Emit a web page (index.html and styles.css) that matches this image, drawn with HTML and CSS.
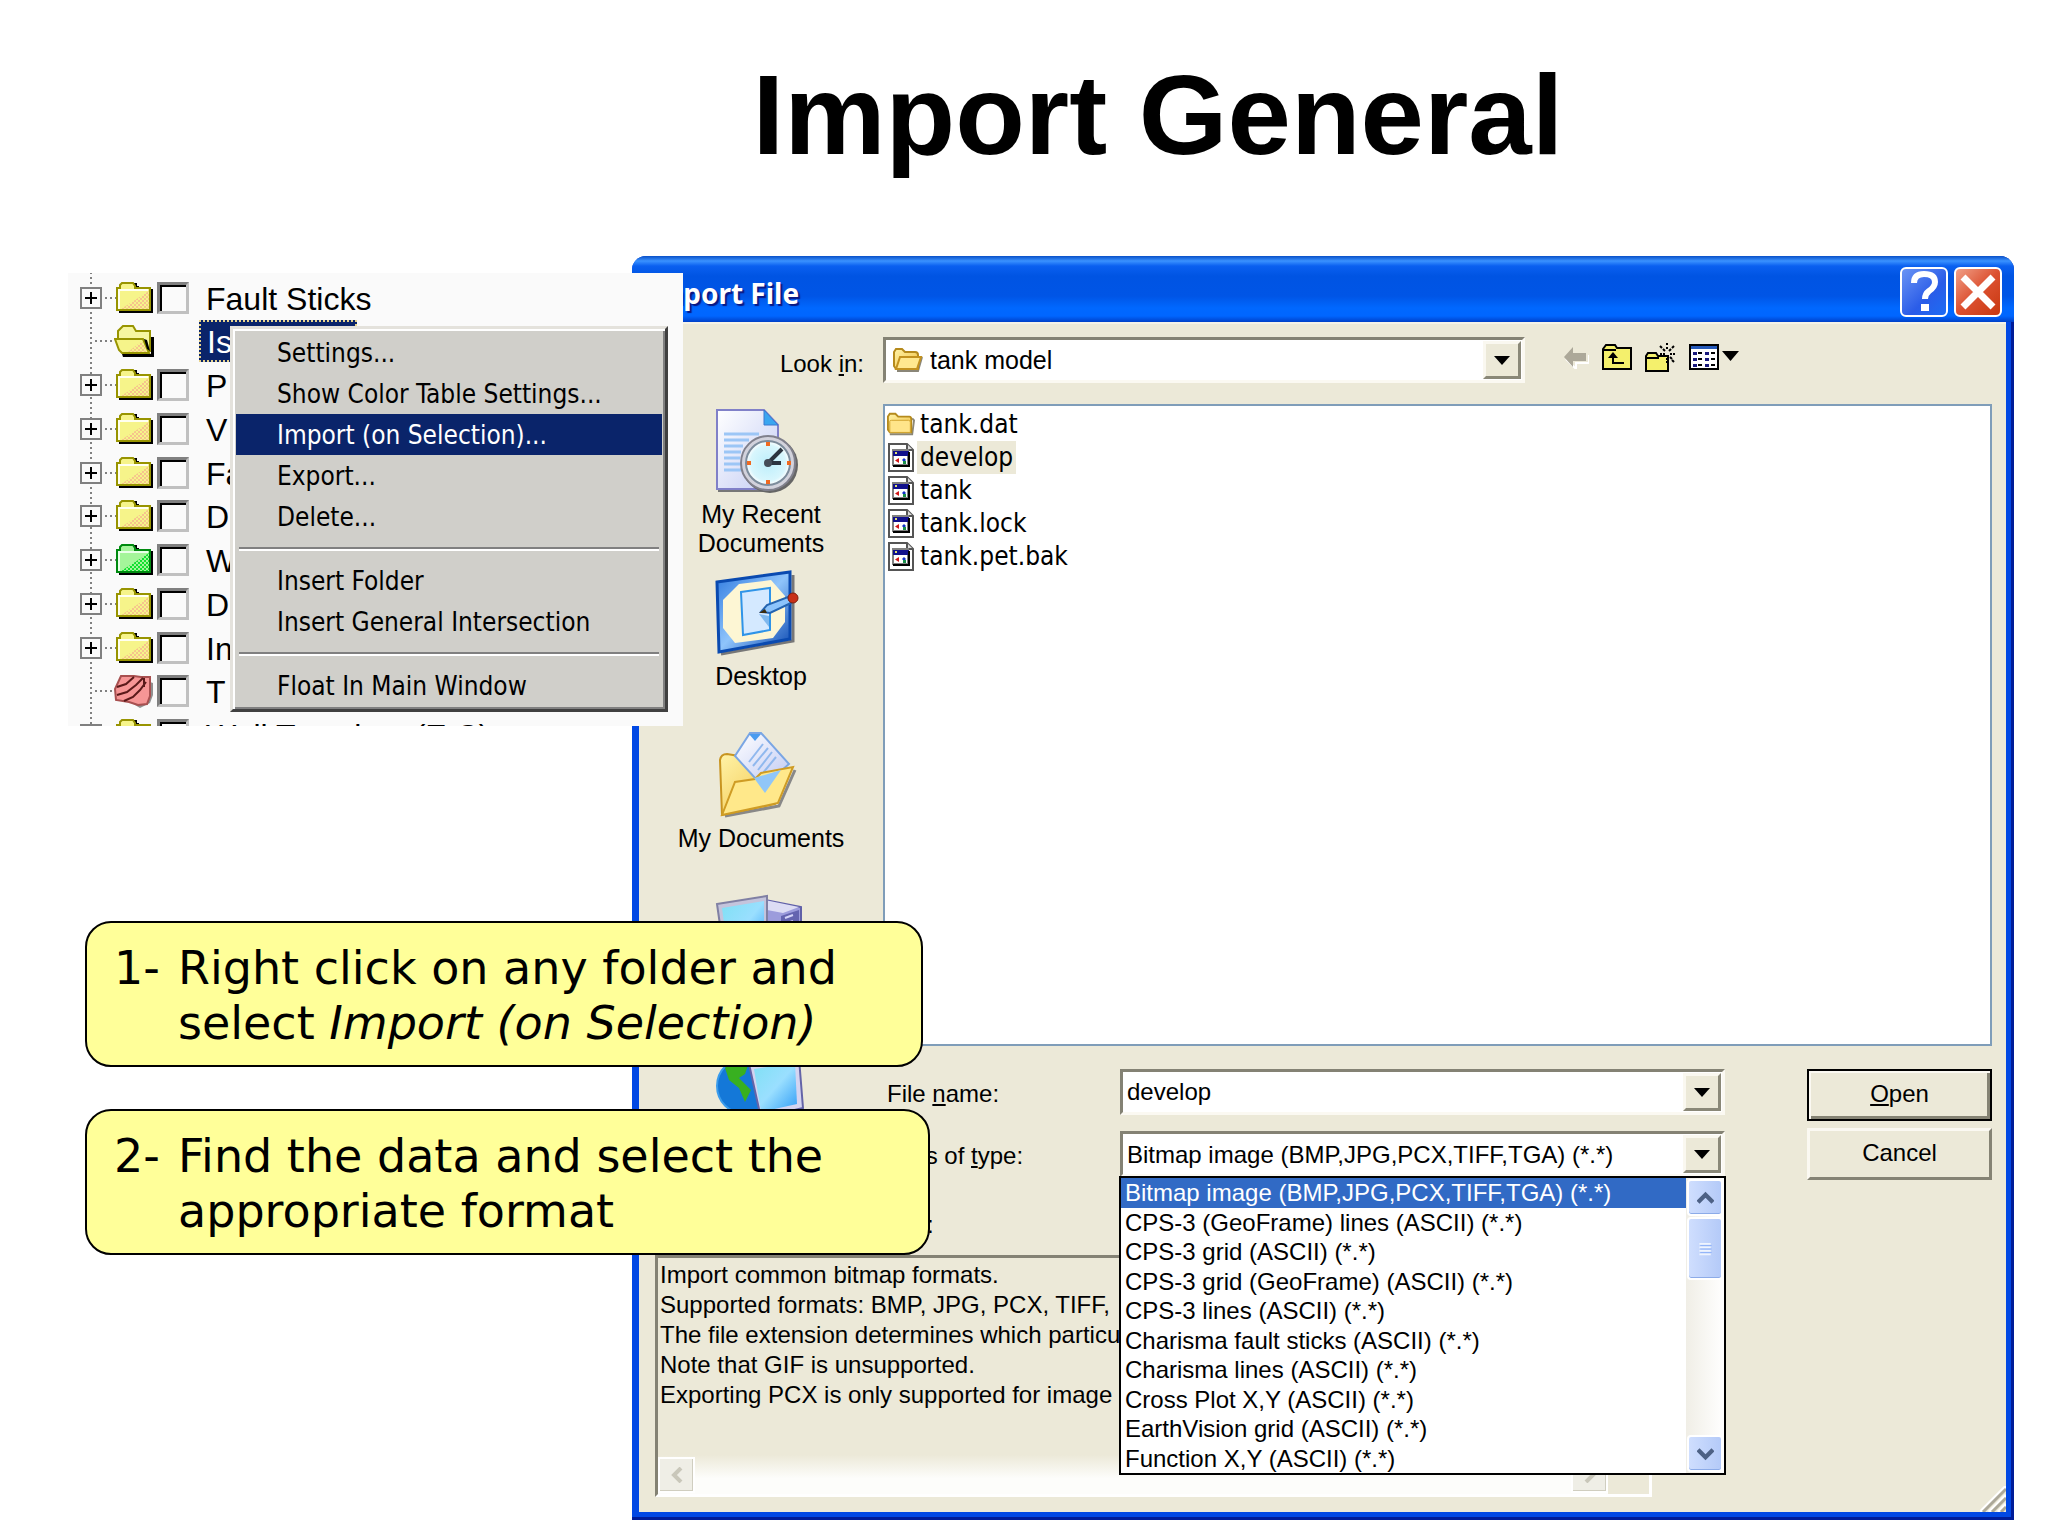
FILE: index.html
```html
<!DOCTYPE html>
<html lang="en">
<head>
<meta charset="utf-8">
<title>Import General</title>
<link rel="stylesheet" href="styles.css">
</head>
<body>
<svg class="defs" aria-hidden="true">
  <defs>
    <linearGradient id="gold" x1="0" y1="0" x2="1" y2="1"><stop offset="0" stop-color="#fff3a8"/><stop offset="1" stop-color="#f0c040"/></linearGradient>
    <linearGradient id="paper" x1="0" y1="0" x2="1" y2="1"><stop offset="0" stop-color="#ffffff"/><stop offset="1" stop-color="#c3ccf4"/></linearGradient>
    <linearGradient id="screen" x1="0" y1="0" x2="1" y2="1"><stop offset="0" stop-color="#7fe0f4"/><stop offset="0.5" stop-color="#9adfff"/><stop offset="1" stop-color="#2f9cf6"/></linearGradient>
    <linearGradient id="blue" x1="0" y1="0" x2="1" y2="1"><stop offset="0" stop-color="#2f7ae0"/><stop offset="0.5" stop-color="#8fc4fb"/><stop offset="1" stop-color="#0a47b0"/></linearGradient>
    <radialGradient id="dial"><stop offset="0" stop-color="#bdeefb"/><stop offset="0.8" stop-color="#d8f6fd"/><stop offset="1" stop-color="#ffffff"/></radialGradient>
    <pattern id="peach" width="4" height="4" patternUnits="userSpaceOnUse"><path d="M0 0h2v2H0zM2 2h2v2H2z" fill="#f6c48c"/></pattern>
    <pattern id="leaf" width="4" height="4" patternUnits="userSpaceOnUse"><path d="M0 0h2v2H0zM2 2h2v2H2z" fill="#10e030"/></pattern>
    <symbol id="folder" viewBox="0 0 37 32">
      <path d="M3 29V31H37V7H34V29z" fill="#000"/><path d="M18 1h3v3h2v2h-5z" fill="#000"/>
      <path d="M1 6H4V3L6 1H17L19 4V6H34V28H1z" fill="#f6f48a" stroke="#989400" stroke-width="2"/>
      <path d="M5 27L33 9V27z" fill="url(#peach)"/>
      <path d="M3 27V8H32" fill="none" stroke="#fffff0" stroke-width="2"/>
    </symbol>
    <symbol id="folder-green" viewBox="0 0 37 32">
      <path d="M3 29V31H37V7H34V29z" fill="#000"/><path d="M18 1h3v3h2v2h-5z" fill="#000"/>
      <path d="M1 6H4V3L6 1H17L19 4V6H34V28H1z" fill="#a4f59a" stroke="#008a10" stroke-width="2"/>
      <path d="M5 27L33 9V27z" fill="url(#leaf)"/>
      <path d="M3 27V8H32" fill="none" stroke="#eaffea" stroke-width="2"/>
    </symbol>
    <symbol id="folder-open" viewBox="0 0 40 32">
      <path d="M8 29h29V12h3v20H9z" fill="#000"/>
      <path d="M4 13V6L7 3 9 1H19L22 6H36V27" fill="#f6f6a0" stroke="#989400" stroke-width="2"/>
      <path d="M1 14H29L35 28H8L5 25z" fill="#f6f48a" stroke="#989400" stroke-width="2"/>
      <path d="M14 27L28 16 33 27z" fill="url(#peach)"/>
      <path d="M30 14l3 1 3 11-3-2z" fill="#000"/>
    </symbol>
    <symbol id="surface" viewBox="0 0 40 34">
      <path d="M36 8l3 1v12l-3 8-6 3-4 2-10-6z" fill="#909090"/>
      <path d="M7 2H20L27 3H36V22L33 30 24 31 15 28 2 26 1 15z" fill="#f69696" stroke="#a85050" stroke-width="2"/>
      <path d="M3 13L12 10 20 3M3 21L13 18 22 11 29 4M10 27L19 23 26 16 32 8M30 4v9" fill="none" stroke="#5a1a1a" stroke-width="2"/>
    </symbol>
    <symbol id="xp-folder" viewBox="0 0 30 25">
      <path d="M3 23H27L29 8 27 6" fill="none" stroke="#8a8678" stroke-width="2"/>
      <path d="M1 4L3 1H9L12 4H24Q26 4 26 7V21H3L1 18z" fill="url(#gold)" stroke="#b58a1c" stroke-width="2"/>
      <path d="M3 21V9Q3 8 5 8H23Q25 8 25 10V21z" fill="#ffe58a" stroke="#d0a22c" stroke-width="1"/>
    </symbol>
    <symbol id="xp-folder-open" viewBox="0 0 30 25">
      <path d="M4 23H25L29 9" fill="none" stroke="#8a8678" stroke-width="2"/>
      <path d="M1 4L3 1H9L12 4H22Q25 4 25 7V21H3L1 18z" fill="url(#gold)" stroke="#b58a1c" stroke-width="2"/>
      <path d="M3 21L7 9H28L24 21z" fill="#ffe88f" stroke="#c3921f" stroke-width="2"/>
    </symbol>
    <symbol id="doc" viewBox="0 0 26 29">
      <path d="M1 1H19L25 7V28H1z" fill="#fff" stroke="#555" stroke-width="2"/>
      <path d="M19 1V7H25" fill="#ddd" stroke="#555" stroke-width="2"/>
      <path d="M5 7H20V22H5z" fill="#fff" stroke="#808080" stroke-width="2"/>
      <path d="M5 8H21V13H5z" fill="#10108c"/><path d="M7 9h2v2H7z" fill="#e0e070"/>
      <path d="M21 9V23H5" fill="none" stroke="#000" stroke-width="2"/>
      <path d="M11 15v5l-4-2.500z" fill="#d01818"/><path d="M14 17l2-2 2 2-2 2z" fill="#1030c8"/><path d="M15 18h3v3h-3z" fill="#18904c"/>
    </symbol>
    <symbol id="arrow-down" viewBox="0 0 16 9"><path d="M0 0H16L8 9z" fill="#000"/></symbol>
  </defs>
</svg>

<main class="slide">
  <h1 class="slide-title">Import General</h1>

  <section class="dialog" aria-label="Import File">
    <header class="titlebar">
      <h2 class="titlebar-text">Import File</h2>
      <button class="caption-btn help" aria-label="Help"><svg viewBox="0 0 44 46"><path d="M12 14Q12 5 22 5Q33 5 33 13Q33 18 27 22Q23 25 23 30" fill="none" stroke="#fff" stroke-width="6"/><path d="M19 35h8v7h-8z" fill="#fff"/></svg></button>
      <button class="caption-btn close" aria-label="Close"><svg viewBox="0 0 44 46"><path d="M7 8L37 38M37 8L7 38" stroke="#fff" stroke-width="7"/></svg></button>
    </header>

    <div class="dialog-body">
      <label class="look-label" for="look-in">Look <u>i</u>n:</label>
      <div class="look-bar">
        <div class="combo look-combo">
          <svg class="combo-icon"><use href="#xp-folder-open"/></svg>
          <select id="look-in" class="combo-field"><option>tank model</option></select>
          <span class="combo-arrow"><svg><use href="#arrow-down"/></svg></span>
        </div>
        <div class="toolbar">
          <button class="tool back" aria-label="Back"><svg viewBox="0 0 26 24"><path d="M3 14L13 24V18H26V10" fill="none" stroke="#fff" stroke-width="2"/><path d="M1 12L10 2V8H23V16H10V22z" fill="#aca899"/></svg></button>
          <button class="tool up" aria-label="Up one level"><svg viewBox="0 0 30 26"><path d="M1 25V5L4 1H13L15 4H29V25z" fill="#f4f06c" stroke="#000" stroke-width="2"/><path d="M2 6H14" stroke="#000" stroke-width="2"/><path d="M6 14L11 8 16 14z"/><path d="M11 12V19H22" fill="none" stroke="#000" stroke-width="2"/></svg></button>
          <button class="tool new" aria-label="New folder"><svg viewBox="0 0 31 29"><path d="M1 28V13L3 10H11L13 13H23V28z" fill="#f4f06c" stroke="#000" stroke-width="2"/><path d="M2 15H14" stroke="#000" stroke-width="2"/><path d="M22 0v2M22 4v2M22 15v2M22 18v2M15 3l2 2M18 6l2 2M29 3l-2 2M26 6l-2 2M15 11h2M18 11h2M25 11h2M28 11h2M25 14l2 2M27 17l2 2" stroke="#000" stroke-width="2"/></svg></button>
          <button class="tool view" aria-label="View menu"><svg viewBox="0 0 50 26"><path d="M1 1H29V25H1z" fill="#fff" stroke="#000" stroke-width="2"/><path d="M2 2h26v3H2z" fill="#2458b8"/><path d="M4 8h4v3H4zM4 14h4v3H4zM4 20h4v3H4zM16 8h4v3h-4zM16 14h4v3h-4zM16 20h4v3h-4z" fill="#18187c"/><path d="M9 8h4v2H9zM9 14h4v2H9zM9 20h4v2H9zM22 8h4v2h-4zM22 14h4v2h-4zM22 20h4v2h-4z"/><path d="M33 7H50L41.500 17z"/></svg></button>
        </div>
      </div>

      <nav class="places">
        <a class="place" href="#recent">
          <svg class="place-icon" viewBox="0 0 84 86"><path d="M2 2H49L63 17V81H2z" fill="url(#paper)" stroke="#8080c8" stroke-width="2"/><path d="M3 83H60" stroke="#777" stroke-width="2"/><path d="M49 2L63 17H49z" fill="#3aa6f0" stroke="#3a78d0" stroke-width="1"/><path d="M9 26H44M9 32H34M9 38H28M9 44H26M9 50H25M9 56H26M9 62H28" stroke="#9cc6f6" stroke-width="3"/><circle cx="55" cy="57" r="28" fill="#666"/><circle cx="53" cy="55" r="27" fill="#d2d2dc" stroke="#80808c" stroke-width="2"/><circle cx="53" cy="55" r="22" fill="url(#dial)" stroke="#7c8c9c" stroke-width="2"/><path d="M53 55L67 41M53 55H66" stroke="#2c3440" stroke-width="4"/><circle cx="53" cy="55" r="4" fill="#444c58"/><path d="M51 34h4v4h-4zM51 72h4v4h-4zM32 53h4v4h-4zM72 53h4v4h-4z" fill="#f06a20"/></svg>
          <span>My Recent<br>Documents</span>
        </a>
        <a class="place" href="#desktop">
          <svg class="place-icon" viewBox="0 0 84 86"><path d="M6 84L78 71V5" fill="none" stroke="#777" stroke-width="3"/><path d="M2 12L75 2V69L4 82z" fill="url(#blue)" stroke="#0a4ab0" stroke-width="3"/><path d="M24 14L56 10 70 26V52L58 68 20 73 8 58V30z" fill="#fdf6d4"/><path d="M26 22L55 18V60L28 65z" fill="#d4e9ff" stroke="#2f94e8" stroke-width="2"/><path d="M44 44L54 57 54 46z" fill="#7fb8ee"/><path d="M46 42L52 35 73 27 76 33 55 43z" fill="#8cc4fc" stroke="#2464b0" stroke-width="2"/><path d="M44 43l6-4 2 4z" fill="#3a2c10"/><circle cx="78" cy="28" r="5" fill="#c83018" stroke="#802010"/></svg>
          <span>Desktop</span>
        </a>
        <a class="place" href="#documents">
          <svg class="place-icon" viewBox="0 0 84 86"><path d="M10 84L64 74 80 38" fill="none" stroke="#888" stroke-width="3"/><path d="M5 28Q6 22 12 22L24 24 70 36 60 72 7 83z" fill="url(#gold)" stroke="#c89420" stroke-width="2"/><path d="M35 1H46L74 32 58 46H40L20 24z" fill="url(#paper)" stroke="#7aa6e4" stroke-width="2"/><path d="M34 2H46L40 9z" fill="#4a9cf0"/><path d="M48 12L34 30M53 16L38 34M57 20L43 38M61 25L48 41" stroke="#90b8ee" stroke-width="2"/><path d="M7 83L20 50 40 47 46 41 78 35 63 71z" fill="#ffe88a" stroke="#cf9c24" stroke-width="2"/><path d="M39 46L66 38 50 61z" fill="#90c6f8"/></svg>
          <span>My Documents</span>
        </a>
        <a class="place" href="#computer" aria-label="My Computer">
          <svg class="place-icon" viewBox="0 0 84 86"><path d="M50 6L86 13V52L52 62z" fill="#9c9cdc" stroke="#6060a8" stroke-width="2"/><path d="M50 6L84 13 68 19 52 16z" fill="#dcdcf4"/><path d="M66 22L84 16V50L66 56z" fill="#6464b0"/><path d="M70 24l8-3M70 30l8-3" stroke="#d4d4f8" stroke-width="2"/><path d="M2 10L52 2V58L10 66z" fill="#c4c4dc" stroke="#8080a4" stroke-width="2"/><path d="M7 14L49 7V53L13 59z" fill="url(#screen)"/></svg>
        </a>
        <a class="place network" href="#network" aria-label="My Network Places">
          <svg class="place-icon" viewBox="0 0 84 86"><circle cx="30" cy="52" r="28" fill="#1478d8" stroke="#3a9cec" stroke-width="2"/><path d="M10 34Q20 24 34 28L30 40 24 44 36 56 30 68 24 54 14 46z" fill="#38b020"/><path d="M58 76L80 72 76 84 60 86z" fill="#5050b8"/><path d="M34 30L84 24 88 74 46 84z" fill="#d4d4f0" stroke="#6464a8" stroke-width="2"/><path d="M39 35L80 29 82 70 46 78z" fill="url(#screen)"/></svg>
        </a>
      </nav>

      <div class="files">
        <ul class="file-list">
          <li class="file"><svg class="file-icon"><use href="#xp-folder"/></svg><span class="file-name">tank.dat</span></li>
          <li class="file"><svg class="file-icon"><use href="#doc"/></svg><span class="file-name selected">develop</span></li>
          <li class="file"><svg class="file-icon"><use href="#doc"/></svg><span class="file-name">tank</span></li>
          <li class="file"><svg class="file-icon"><use href="#doc"/></svg><span class="file-name">tank.lock</span></li>
          <li class="file"><svg class="file-icon"><use href="#doc"/></svg><span class="file-name">tank.pet.bak</span></li>
        </ul>

        <form class="form">
          <div class="fields">
            <label class="field-label" for="file-name">File <u>n</u>ame:</label>
            <div class="combo">
              <input id="file-name" class="combo-field" type="text" value="develop">
              <span class="combo-arrow"><svg><use href="#arrow-down"/></svg></span>
            </div>
            <label class="field-label" for="file-type">Files of <u>t</u>ype:</label>
            <div class="type-field">
              <div class="combo">
                <select id="file-type" class="combo-field"><option>Bitmap image (BMP,JPG,PCX,TIFF,TGA) (*.*)</option></select>
                <span class="combo-arrow"><svg><use href="#arrow-down"/></svg></span>
              </div>
              <div class="dropdown">
                <ul class="options" role="listbox" aria-label="Files of type">
                  <li class="option active" role="option" aria-selected="true">Bitmap image (BMP,JPG,PCX,TIFF,TGA) (*.*)</li>
                  <li class="option" role="option">CPS-3 (GeoFrame) lines (ASCII) (*.*)</li>
                  <li class="option" role="option">CPS-3 grid (ASCII) (*.*)</li>
                  <li class="option" role="option">CPS-3 grid (GeoFrame) (ASCII) (*.*)</li>
                  <li class="option" role="option">CPS-3 lines (ASCII) (*.*)</li>
                  <li class="option" role="option">Charisma fault sticks (ASCII) (*.*)</li>
                  <li class="option" role="option">Charisma lines (ASCII) (*.*)</li>
                  <li class="option" role="option">Cross Plot X,Y (ASCII) (*.*)</li>
                  <li class="option" role="option">EarthVision grid (ASCII) (*.*)</li>
                  <li class="option" role="option">Function X,Y (ASCII) (*.*)</li>
                </ul>
                <div class="vscroll">
                  <span class="vscroll-part"><svg viewBox="0 0 16 12"><path d="M1 10L8 3 15 10" fill="none" stroke="#4d6185" stroke-width="4"/></svg></span>
                  <span class="vscroll-part thumb"><svg viewBox="0 0 16 16"><path d="M1 2H14M1 6H14M1 10H14M1 14H14" stroke="#eef4fe" stroke-width="2"/><path d="M2 4H15M2 8H15M2 12H15" stroke="#8cb0f8" stroke-width="1"/></svg></span>
                  <span class="vscroll-part bottom"><svg viewBox="0 0 16 12"><path d="M1 2L8 9 15 2" fill="none" stroke="#4d6185" stroke-width="4"/></svg></span>
                </div>
              </div>
            </div>
            <span class="field-label info-label">Info:</span>
          </div>
          <div class="actions">
            <button class="btn default" type="button"><span><u>O</u>pen</span></button>
            <button class="btn" type="button">Cancel</button>
          </div>
        </form>
      </div>

      <div class="description">
        <div class="description-text">
          <p>Import common bitmap formats.</p>
          <p>Supported formats: BMP, JPG, PCX, TIFF,</p>
          <p>The file extension determines which particular</p>
          <p>Note that GIF is unsupported.</p>
          <p>Exporting PCX is only supported for image</p>
        </div>
        <div class="hscroll">
          <span class="hscroll-btn"><svg viewBox="0 0 12 16"><path d="M10 1L3 8 10 15" fill="none" stroke="#c9c7ba" stroke-width="4"/></svg></span>
          <span class="hscroll-btn"><svg viewBox="0 0 12 16"><path d="M2 1L9 8 2 15" fill="none" stroke="#c9c7ba" stroke-width="4"/></svg></span>
        </div>
      </div>
      <svg class="grip" viewBox="0 0 26 26"><path d="M0 26L26 0M9 26L26 9M18 26L26 18" stroke="#fff" stroke-width="3"/><path d="M3 26L26 3M12 26L26 12M21 26L26 21" stroke="#aca899" stroke-width="3"/></svg>
    </div>
  </section>

  <section class="tree-panel" aria-label="Project tree">
    <ul class="tree">
      <li class="node"><span class="expander"></span><span class="link"></span><svg class="node-icon"><use href="#folder"/></svg><input class="node-check" type="checkbox" id="n0"><label class="node-label" for="n0">Survey polygons</label></li>
      <li class="node"><span class="expander"></span><span class="link"></span><svg class="node-icon"><use href="#folder"/></svg><input class="node-check" type="checkbox" id="n1"><label class="node-label" for="n1">Fault Sticks</label></li>
      <li class="node leaf"><span class="link"></span><svg class="node-icon wide"><use href="#folder-open"/></svg><span class="node-label selected">Is</span></li>
      <li class="node"><span class="expander"></span><span class="link"></span><svg class="node-icon"><use href="#folder"/></svg><input class="node-check" type="checkbox" id="n2"><label class="node-label" for="n2">P</label></li>
      <li class="node"><span class="expander"></span><span class="link"></span><svg class="node-icon"><use href="#folder"/></svg><input class="node-check" type="checkbox" id="n3"><label class="node-label" for="n3">V</label></li>
      <li class="node"><span class="expander"></span><span class="link"></span><svg class="node-icon"><use href="#folder"/></svg><input class="node-check" type="checkbox" id="n4"><label class="node-label" for="n4">Fa</label></li>
      <li class="node"><span class="expander"></span><span class="link"></span><svg class="node-icon"><use href="#folder"/></svg><input class="node-check" type="checkbox" id="n5"><label class="node-label" for="n5">D</label></li>
      <li class="node"><span class="expander"></span><span class="link"></span><svg class="node-icon"><use href="#folder-green"/></svg><input class="node-check" type="checkbox" id="n6"><label class="node-label" for="n6">W</label></li>
      <li class="node"><span class="expander"></span><span class="link"></span><svg class="node-icon"><use href="#folder"/></svg><input class="node-check" type="checkbox" id="n7"><label class="node-label" for="n7">D</label></li>
      <li class="node"><span class="expander"></span><span class="link"></span><svg class="node-icon"><use href="#folder"/></svg><input class="node-check" type="checkbox" id="n8"><label class="node-label" for="n8">In</label></li>
      <li class="node leaf"><span class="link"></span><svg class="node-icon wide"><use href="#surface"/></svg><input class="node-check" type="checkbox" id="n9"><label class="node-label" for="n9">T</label></li>
      <li class="node"><span class="expander"></span><span class="link"></span><svg class="node-icon"><use href="#folder"/></svg><input class="node-check" type="checkbox" id="n10"><label class="node-label" for="n10">Well Template (E C)</label></li>
    </ul>
    <div class="menu" role="menu">
      <button class="menu-item" role="menuitem">Settings...</button>
      <button class="menu-item" role="menuitem">Show Color Table Settings...</button>
      <button class="menu-item active" role="menuitem">Import (on Selection)...</button>
      <button class="menu-item" role="menuitem">Export...</button>
      <button class="menu-item" role="menuitem">Delete...</button>
      <hr class="menu-sep">
      <button class="menu-item" role="menuitem">Insert Folder</button>
      <button class="menu-item" role="menuitem">Insert General Intersection</button>
      <hr class="menu-sep">
      <button class="menu-item" role="menuitem">Float In Main Window</button>
    </div>
  </section>

  <div class="callout first"><span class="callout-num">1-</span><p>Right click on any folder and<br>select <em>Import (on Selection)</em></p></div>
  <div class="callout second"><span class="callout-num">2-</span><p>Find the data and select the<br>appropriate format</p></div>
</main>
</body>
</html>
```
FILE: styles.css
```css
* { box-sizing: border-box; }
body { margin: 0; background: #fff; color: #000; font-family: "Liberation Sans", Arial, sans-serif; font-size: 24px; }
h1, h2, p, ul { margin: 0; padding: 0; }
ul { list-style: none; }
button, input, select { font: inherit; color: inherit; margin: 0; border-radius: 0; }
svg { display: block; }
.defs { position: absolute; width: 0; height: 0; }

.slide { position: relative; padding: 0 34px 16px 632px; }
.slide-title { height: 256px; margin-left: -330px; padding-top: 49px; font-size: 114px; line-height: 132px; text-align: center; white-space: nowrap; }

/* Dialog window */
.dialog { padding: 0 5px 5px 7px; border: solid #001c98; border-width: 0 3px 3px 0; border-radius: 14px 14px 0 0; background: #0148e4; }
.titlebar { display: flex; align-items: center; gap: 6px; height: 66px; margin: 0 -8px 0 -7px; padding: 6px 12px 0 13px; border-radius: 14px 14px 0 0; background: linear-gradient(#0a50c8 0, #3a92ff 5px, #0a60f0 10px, #0054e3 20px, #0055e6 40px, #0068ff 52px, #0066ff 60px, #0040c8 66px); }
.titlebar-text { flex: 1; padding-top: 2px; font: bold 28px/40px "Noto Sans", "Open Sans", sans-serif; color: #fff; text-shadow: 2px 2px 1px #0a1883; }
.caption-btn { width: 48px; height: 50px; padding: 0; border: 2px solid #fff; border-radius: 6px; }
.caption-btn.help { background: linear-gradient(135deg, #6a94f4, #2a5ce8 60%, #1c6cf4); }
.caption-btn.close { background: linear-gradient(135deg, #f0a088, #dc5030 50%, #c83810); }

.dialog-body { position: relative; display: grid; grid-template-columns: 244px minmax(0, 1fr); padding-right: 14px; padding-bottom: 15px; background: #ece9d8; border-top: 2px solid #f4f2e8; }
.look-label { justify-self: end; padding: 24px 19px 0 0; line-height: 32px; }
.look-bar { display: flex; height: 80px; padding-top: 13px; }
.combo { display: flex; align-items: center; height: 46px; background: #fff; border: 3px solid; border-color: #848274 #fbf9f2 #fbf9f2 #848274; padding: 1px; }
.combo-field { flex: 1; min-width: 0; height: 38px; padding: 0 0 0 3px; border: 0; outline: 0; background: transparent; appearance: none; }
.combo-icon { width: 30px; height: 25px; margin-left: 6px; }
.combo-icon + .combo-field { padding-left: 7px; font-size: 25px; }
.combo-arrow { display: flex; align-items: center; justify-content: center; width: 38px; height: 38px; background: #ece9d8; border: 3px solid; border-color: #faf8f0 #8a8878 #8a8878 #faf8f0; }
.combo-arrow svg { width: 16px; height: 9px; }
.look-combo { flex: 1; }
.toolbar { display: flex; align-items: center; gap: 13px; width: 467px; height: 46px; padding: 0 0 6px 38px; }
.tool { padding: 0; border: 0; background: none; }
.back svg { width: 26px; height: 24px; }
.up svg { width: 30px; height: 26px; }
.new svg { width: 31px; height: 29px; }
.view svg { width: 50px; height: 26px; }

.places { display: flex; flex-direction: column; align-items: center; gap: 12px; padding-top: 4px; font-size: 25px; line-height: 29px; text-align: center; }
.place { display: flex; flex-direction: column; align-items: center; gap: 6px; height: 150px; color: #000; text-decoration: none; }
.place-icon { width: 84px; height: 86px; margin-right: 8px; overflow: visible; }
.network { height: 100px; margin-top: -22px; }

.file-list { height: 642px; padding: 2px 0 0 2px; background: #fff; border: 2px solid #7f9db9; font-family: "DejaVu Sans Condensed", "Noto Sans", sans-serif; font-size: 26px; line-height: 33px; }
.file { display: flex; align-items: center; gap: 2px; }
.file-icon { width: 28px; height: 29px; }
.file-name { padding: 0 3px; }
.file-name.selected { background: #ece9d8; }

.form { display: flex; gap: 82px; padding-top: 23px; }
.fields { flex: 1; display: grid; grid-template-columns: 237px minmax(0, 1fr); align-content: start; row-gap: 16px; }
.field-label { padding: 5px 0 0 4px; line-height: 40px; }
.info-label { line-height: 32px; padding: 16px 0 14px 4px; }
.actions { display: flex; flex-direction: column; gap: 7px; width: 185px; }
.btn { height: 52px; padding: 0 0 3px; background: #ece9d8; border: 3px solid; border-color: #fbf9f2 #858374 #858374 #fbf9f2; }
.btn.default { border: 2px solid #000; box-shadow: inset 2px 2px #fbf9f2, inset -3px -3px #858374; }

.type-field { position: relative; }
.dropdown { position: absolute; z-index: 2; top: 45px; left: -1px; right: -1px; height: 299px; display: flex; background: #fff; border: 2px solid #000; }
.options { flex: 1; display: grid; grid-template-rows: repeat(10, 1fr); }
.option { padding-left: 4px; line-height: 29px; white-space: nowrap; }
.option.active { background: #316ac5; color: #fff; }
.vscroll { display: flex; flex-direction: column; width: 38px; padding: 1px; gap: 1px; background: linear-gradient(90deg, #f0eee6, #fff); }
.vscroll-part { display: flex; align-items: center; justify-content: center; height: 37px; border: 2px solid #fff; border-radius: 4px; background: linear-gradient(90deg, #cfdefe, #b4caf8); box-shadow: inset 0 -1px #8cabe8; }
.vscroll-part svg { width: 17px; height: 14px; }
.vscroll-part.thumb { height: 63px; }
.vscroll-part.bottom { margin-top: auto; }

.description { grid-column: 1 / 3; height: 242px; margin: 0 340px 0 16px; display: flex; flex-direction: column; justify-content: space-between; border: 3px solid; border-color: #848274 #fff #fff #848274; overflow: hidden; }
.description-text { padding: 2px 0 0 2px; line-height: 30px; white-space: nowrap; }
.hscroll { display: flex; justify-content: space-between; height: 39px; margin-right: 41px; padding: 2px 0 1px; background: linear-gradient(#ece9d8, #fdfdfb 60%); }
.hscroll-btn { display: flex; align-items: center; justify-content: center; width: 37px; height: 36px; background: #efeee6; border: 2px solid #fff; box-shadow: inset -1px -1px #d0cec0; }
.hscroll-btn svg { width: 12px; height: 16px; }
.grip { position: absolute; right: 0; bottom: 0; width: 26px; height: 26px; }

/* Project tree with its context menu */
.tree-panel { position: absolute; left: 68px; top: 273px; width: 615px; height: 453px; overflow: hidden; background: #fafafa; }
.tree { display: grid; grid-template-rows: repeat(12, 1fr); height: 525px; margin-top: -41px; font-size: 32px; background: repeating-linear-gradient(#808080 0 2px, transparent 2px 5px) 22px 0 / 2px 100% no-repeat; }
.node { display: flex; align-items: center; padding-left: 12px; white-space: nowrap; }
.expander { width: 22px; height: 22px; border: 2px solid #808080; background: linear-gradient(#000, #000) center / 12px 2px no-repeat, linear-gradient(#000, #000) center / 2px 12px no-repeat, #fafafa; }
.link { width: 14px; height: 2px; background: repeating-linear-gradient(90deg, transparent 0 3px, #808080 3px 5px); }
.leaf .link { width: 22px; margin-left: 12px; }
.node-icon { width: 37px; height: 32px; }
.node-icon.wide { width: 40px; height: 34px; margin-right: -1px; }
.node-check { appearance: none; width: 32px; height: 32px; margin-left: 4px; background: #fafafa; border: 3px solid; border-color: #808080 #c0c0c0 #c0c0c0 #808080; box-shadow: inset 2px 2px #000; }
.node-label { margin-left: 9px; padding: 3px 8px 0; line-height: 39px; }
.node-label.selected { margin-left: 46px; width: 158px; background: #0a246a; color: #fff; outline: 2px dotted #e8d48c; outline-offset: -2px; }

.menu { position: absolute; left: 162px; top: 53px; width: 438px; padding: 3px; background: #d0cfca; border: 3px solid; border-color: #e4e2dc #404040 #404040 #e4e2dc; box-shadow: inset 2px 2px #fff, inset -2px -2px #808080; font-family: "DejaVu Sans Condensed", "Noto Sans", sans-serif; }
.menu-item { display: block; width: 100%; height: 41px; padding: 0 0 0 41px; border: 0; background: none; font-size: 26px; text-align: left; white-space: nowrap; }
.menu-item.active { background: #0a246a; color: #fff; }
.menu-sep { height: 4px; margin: 10px 3px 9px; border: 0; background: linear-gradient(#808080 50%, #fff 50%); }

/* Step callouts */
.callout { position: absolute; z-index: 3; left: 85px; display: flex; height: 146px; padding: 18px 27px; border: 2px solid #000; border-radius: 26px; background: #ff9; font: 46px/55px "DejaVu Sans", Verdana, sans-serif; white-space: nowrap; }
.callout-num { width: 64px; }
.first { top: 921px; width: 838px; }
.second { top: 1109px; width: 845px; }
```
